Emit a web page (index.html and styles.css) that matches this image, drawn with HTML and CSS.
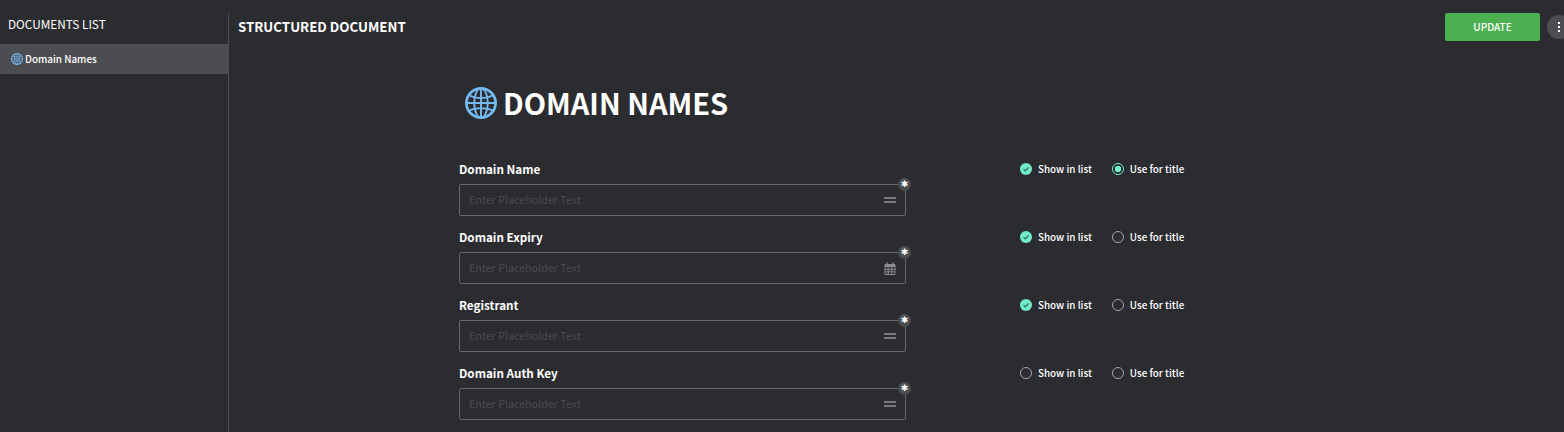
FILE: index.html
```html
<!DOCTYPE html>
<html lang="en">
<head>
<meta charset="utf-8">
<title>Structured Document</title>
<link rel="stylesheet" href="styles.css">
</head>
<body>
<svg class="defs" width="0" height="0" aria-hidden="true">
  <symbol id="globe" viewBox="0 0 32 32">
    <g fill="none" stroke="#74b9f0">
      <circle cx="16" cy="16" r="14.6" stroke-width="2.8"/>
      <g stroke-width="1.9">
        <ellipse cx="16" cy="16" rx="6.8" ry="14.6"/>
        <path d="M16 1.5v29M1.5 16h29M4.2 8.2c3 1.8 7 2.7 11.8 2.7s8.800-.9 11.800-2.700M4.200 23.800c3-1.800 7-2.700 11.800-2.700s8.800.9 11.800 2.700"/>
      </g>
    </g>
  </symbol>
</svg>
<aside class="sidebar">
  <h2 class="sidebar-title">DOCUMENTS LIST</h2>
  <div class="doc-item"><svg class="doc-icon"><use href="#globe"/></svg><span>Domain Names</span></div>
</aside>
<main class="main">
  <header class="topbar">
    <h1 class="page-title">STRUCTURED DOCUMENT</h1>
    <div class="actions">
      <button class="update">UPDATE</button>
      <span class="kebab"><i></i><i></i><i></i></span>
    </div>
  </header>
  <section class="form">
    <div class="doc-heading"><svg class="heading-icon"><use href="#globe"/></svg><span>DOMAIN NAMES</span></div>

    <div class="row">
      <div class="field">
        <label class="field-label">Domain Name</label>
        <div class="input">
          <span class="placeholder">Enter Placeholder Text</span>
          <span class="lines"></span>
          <span class="req">✱</span>
        </div>
      </div>
      <div class="options">
        <span class="opt"><svg class="check" viewBox="0 0 13 13"><circle cx="6.5" cy="6.5" r="6.5"/><path d="M3.800 6.700l1.900 1.800 3.500-3.600"/></svg>Show in list</span>
        <span class="opt"><span class="radio on"></span>Use for title</span>
      </div>
    </div>

    <div class="row">
      <div class="field">
        <label class="field-label">Domain Expiry</label>
        <div class="input">
          <span class="placeholder">Enter Placeholder Text</span>
          <svg class="cal" viewBox="0 0 12 13"><path d="M1.500 2h9a1 1 0 0 1 1 1v9a1 1 0 0 1-1 1h-9a1 1 0 0 1-1-1V3a1 1 0 0 1 1-1z" fill="#8b8c8e"/><path d="M3 .5v2M9 .5v2" stroke="#8b8c8e" stroke-width="1.400"/><path d="M1.500 5h9v7h-9z" fill="#2b2c2f"/><path d="M4.200 5v7M7.800 5v7M1.500 7.400h9M1.500 9.800h9" stroke="#8b8c8e"/></svg>
          <span class="req">✱</span>
        </div>
      </div>
      <div class="options">
        <span class="opt"><svg class="check" viewBox="0 0 13 13"><circle cx="6.5" cy="6.5" r="6.5"/><path d="M3.800 6.700l1.900 1.800 3.500-3.600"/></svg>Show in list</span>
        <span class="opt"><span class="radio"></span>Use for title</span>
      </div>
    </div>

    <div class="row">
      <div class="field">
        <label class="field-label">Registrant</label>
        <div class="input">
          <span class="placeholder">Enter Placeholder Text</span>
          <span class="lines"></span>
          <span class="req">✱</span>
        </div>
      </div>
      <div class="options">
        <span class="opt"><svg class="check" viewBox="0 0 13 13"><circle cx="6.5" cy="6.5" r="6.5"/><path d="M3.800 6.700l1.900 1.800 3.500-3.600"/></svg>Show in list</span>
        <span class="opt"><span class="radio"></span>Use for title</span>
      </div>
    </div>

    <div class="row">
      <div class="field">
        <label class="field-label">Domain Auth Key</label>
        <div class="input">
          <span class="placeholder">Enter Placeholder Text</span>
          <span class="lines"></span>
          <span class="req">✱</span>
        </div>
      </div>
      <div class="options">
        <span class="opt"><span class="radio"></span>Show in list</span>
        <span class="opt"><span class="radio"></span>Use for title</span>
      </div>
    </div>
  </section>
</main>
</body>
</html>
```
FILE: styles.css
```css
* { box-sizing: border-box; }
html, body { height: 100%; }
body {
  margin: 0;
  display: flex;
  height: 432px;
  overflow: hidden;
  background: #2b2c2f;
  color: #fff;
  font-family: "Noto Sans CJK SC", "Noto Sans", sans-serif;
}
.defs { position: absolute; }
.sidebar { width: 228px; flex: none; }
.sidebar-title {
  margin: 0;
  padding: 15px 0 0 8px;
  height: 44px;
  font-size: 11.8px;
  line-height: 18px;
  font-weight: 400;
}
.doc-item {
  height: 30px;
  display: flex;
  align-items: center;
  gap: 2px;
  padding: 0 0 0 11px;
  background: #4b4d51;
  font-size: 9.9px;
  font-weight: 500;
}
.doc-icon { width: 12px; height: 12px; }
.main {
  flex: 1;
  min-width: 0;
  margin-top: 13px;
  border-left: 1px solid #4b4d51;
  padding-left: 9px;
}
.topbar { display: flex; justify-content: space-between; align-items: flex-start; }
.page-title {
  margin: 0;
  padding-top: 5px;
  font-size: 13.3px;
  line-height: 18px;
  font-weight: 700;
}
.actions { display: flex; align-items: center; gap: 7px; margin-right: -7px; }
.update {
  width: 95px;
  height: 28px;
  border: 0;
  border-radius: 2px;
  background: #4caf50;
  color: #fff;
  font: 500 10px/1 "Noto Sans CJK SC", "Noto Sans", sans-serif;
}
.kebab {
  width: 24px;
  height: 24px;
  border-radius: 50%;
  background: #4b4d51;
  display: flex;
  flex-direction: column;
  align-items: center;
  justify-content: center;
  gap: 2px;
}
.kebab i { width: 2px; height: 2px; background: #fff; }
.form { margin-left: 221px; }
.doc-heading {
  display: flex;
  align-items: center;
  gap: 6px;
  padding-left: 6px;
  margin-top: 37px;
  height: 48px;
  font-size: 29px;
  font-weight: 700;
  line-height: 48px;
}
.heading-icon { width: 32px; height: 32px; margin-top: 2px; }
.row {
  display: flex;
  height: 68px;
}
.form .doc-heading + .row { margin-top: 33px; }
.field { width: 447px; flex: none; }
.field-label {
  display: block;
  height: 25px;
  padding-top: 1px;
  font-size: 11.7px;
  line-height: 18px;
  font-weight: 700;
}
.input {
  position: relative;
  height: 32px;
  border: 1px solid #66676a;
  border-radius: 2px;
  display: flex;
  align-items: center;
  justify-content: space-between;
  padding: 0 9px;
}
.placeholder { font-size: 10.7px; color: #4a4b4f; margin-top: -2px; }
.lines {
  width: 12px;
  height: 6px;
  border-top: 2px solid #77787a;
  border-bottom: 2px solid #77787a;
}
.cal { width: 12px; height: 13px; }
.req {
  position: absolute;
  top: -7px;
  right: -6px;
  width: 13px;
  height: 13px;
  border-radius: 50%;
  background: #4b4d51;
  color: #fff;
  font: 9px/13px "DejaVu Sans", sans-serif;
  text-align: center;
}
.options {
  display: flex;
  gap: 20px;
  margin-left: 114px;
  padding-top: 1px;
}
.opt {
  display: flex;
  align-items: flex-start;
  gap: 6px;
  font-size: 9.85px;
  line-height: 18px;
  font-weight: 500;
}
.check { width: 12px; height: 12px; margin-top: 3px; }
.check circle { fill: #72ebcb; }
.check path { fill: none; stroke: #2c6e5c; stroke-width: 1.3; }
.radio {
  width: 12px;
  height: 12px;
  margin-top: 3px;
  border: 1px solid #a5a6a8;
  border-radius: 50%;
}
.radio.on {
  border-color: #72ebcb;
  background: radial-gradient(circle, #72ebcb 0 3px, transparent 3.5px);
}
```
